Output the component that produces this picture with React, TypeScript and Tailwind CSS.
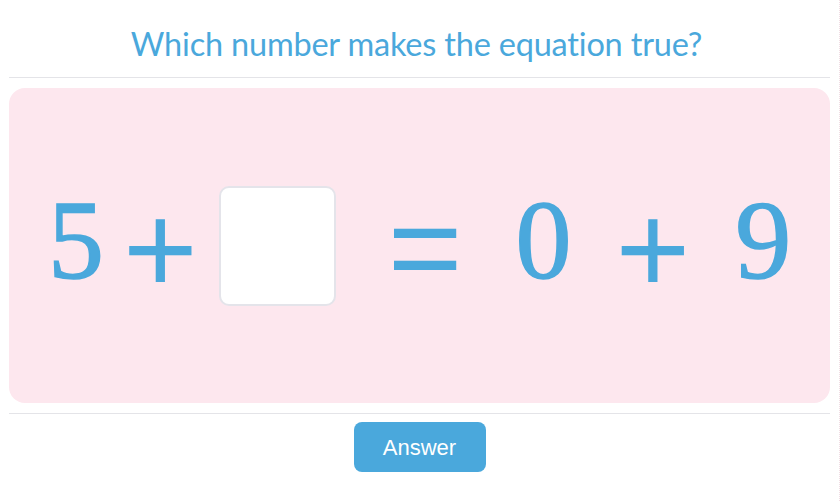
import React, { useState } from 'react';

export default function App() {
  const [value, setValue] = useState('');

  return (
    <div className="w-[840px] h-[501px] bg-white border-r border-dotted border-[#f1dde4] flex flex-col px-[9px] overflow-hidden">
      <div className="h-[77px] flex items-center justify-center pt-[12px]">
        <h1 className="mr-[6px] text-[#4aa8dc] text-[32.5px] font-['Lato'] tracking-[-0.2px]">
          Which number makes the equation true?
        </h1>
      </div>
      <div className="h-px bg-[#e4e4e8]" />

      {/* equation row */}
      <div className="mt-[10px] h-[315px] rounded-[16px] bg-[#fde7ee] flex items-center justify-center text-[#4aa8dc]">
        <span className="font-['Liberation_Serif'] text-[112px] leading-none -translate-y-[6px] [-webkit-text-stroke:1.5px_#4aa8dc]">5</span>
        <span className="font-['Liberation_Sans'] text-[128px] leading-none ml-[19px] translate-y-[3px]">+</span>
        <input
          value={value}
          onChange={(e) => setValue(e.target.value)}
          className="ml-[21px] w-[117px] h-[120px] bg-white rounded-[10px] border-2 border-[#e4e4ea] outline-none text-center text-[60px] font-['Liberation_Serif'] text-[#4aa8dc]"
        />
        <span className="font-['Liberation_Sans'] text-[128px] leading-none ml-[52px] translate-y-[2px]">=</span>
        <span className="font-['Liberation_Serif'] text-[112px] leading-none ml-[53px] -translate-y-[6px] [-webkit-text-stroke:1.5px_#4aa8dc]">0</span>
        <span className="font-['Liberation_Sans'] text-[128px] leading-none ml-[44px] translate-y-[3px]">+</span>
        <span className="font-['Liberation_Serif'] text-[112px] leading-none ml-[45px] -translate-y-[6px] [-webkit-text-stroke:1.5px_#4aa8dc]">9</span>
      </div>

      <div className="mt-[10px] h-px bg-[#e4e4e8]" />
      <div className="flex justify-center pt-[8px]">
        <button className="w-[132px] h-[50px] rounded-[8px] bg-[#4aa8dc] text-white text-[22px] font-['Liberation_Sans']">
          Answer
        </button>
      </div>
    </div>
  );
}
